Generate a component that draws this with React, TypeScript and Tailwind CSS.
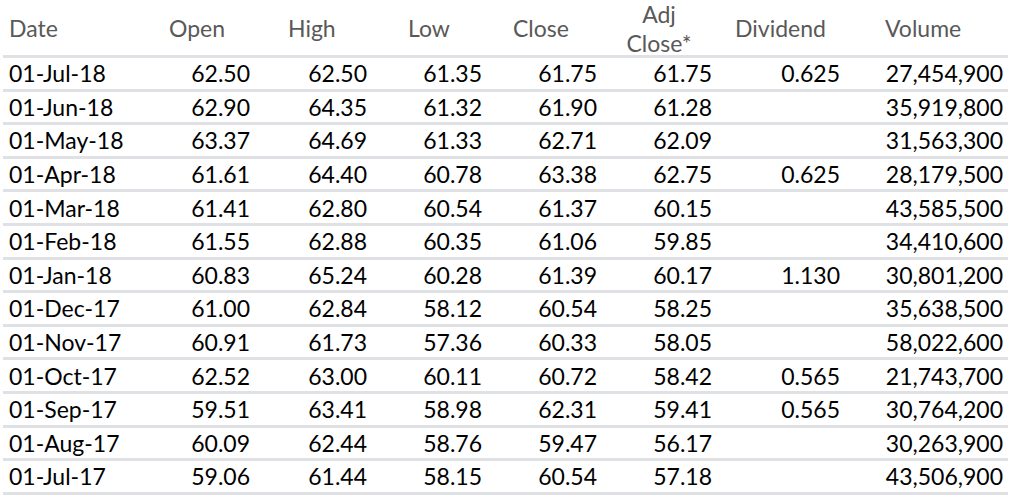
import React from 'react';

type Row = {
  date: string;
  open: string;
  high: string;
  low: string;
  close: string;
  adj: string;
  dividend: string;
  volume: string;
};

const rows: Row[] = [
  { date: '01-Jul-18', open: '62.50', high: '62.50', low: '61.35', close: '61.75', adj: '61.75', dividend: '0.625', volume: '27,454,900' },
  { date: '01-Jun-18', open: '62.90', high: '64.35', low: '61.32', close: '61.90', adj: '61.28', dividend: '', volume: '35,919,800' },
  { date: '01-May-18', open: '63.37', high: '64.69', low: '61.33', close: '62.71', adj: '62.09', dividend: '', volume: '31,563,300' },
  { date: '01-Apr-18', open: '61.61', high: '64.40', low: '60.78', close: '63.38', adj: '62.75', dividend: '0.625', volume: '28,179,500' },
  { date: '01-Mar-18', open: '61.41', high: '62.80', low: '60.54', close: '61.37', adj: '60.15', dividend: '', volume: '43,585,500' },
  { date: '01-Feb-18', open: '61.55', high: '62.88', low: '60.35', close: '61.06', adj: '59.85', dividend: '', volume: '34,410,600' },
  { date: '01-Jan-18', open: '60.83', high: '65.24', low: '60.28', close: '61.39', adj: '60.17', dividend: '1.130', volume: '30,801,200' },
  { date: '01-Dec-17', open: '61.00', high: '62.84', low: '58.12', close: '60.54', adj: '58.25', dividend: '', volume: '35,638,500' },
  { date: '01-Nov-17', open: '60.91', high: '61.73', low: '57.36', close: '60.33', adj: '58.05', dividend: '', volume: '58,022,600' },
  { date: '01-Oct-17', open: '62.52', high: '63.00', low: '60.11', close: '60.72', adj: '58.42', dividend: '0.565', volume: '21,743,700' },
  { date: '01-Sep-17', open: '59.51', high: '63.41', low: '58.98', close: '62.31', adj: '59.41', dividend: '0.565', volume: '30,764,200' },
  { date: '01-Aug-17', open: '60.09', high: '62.44', low: '58.76', close: '59.47', adj: '56.17', dividend: '', volume: '30,263,900' },
  { date: '01-Jul-17', open: '59.06', high: '61.44', low: '58.15', close: '60.54', adj: '57.18', dividend: '', volume: '43,506,900' },
];

const gridCols = 'grid grid-cols-[140px_107px_117px_115px_115px_115px_128px_163px]';

export default function App() {
  return (
    <div
      className="w-[1024px] h-[498px] bg-white overflow-hidden pl-[3px] text-[23px]"
      style={{ fontFamily: 'Lato, "Open Sans", sans-serif' }}
    >
      <div className="w-[1005px]">
        {/* header */}
        <div className={`${gridCols} h-[58px] items-center border-b-[3px] border-[#dfe1e4] text-[#595959] leading-[29px]`}>
          <div className="pl-[6px] pb-[10px]">Date</div>
          <div className="pl-[26px] pb-[10px]">Open</div>
          <div className="pl-[38px] pb-[10px]">High</div>
          <div className="pl-[41px] pb-[10px]">Low</div>
          <div className="pl-[31px] pb-[10px]">Close</div>
          <div className="pl-[25px] pb-[8px]">
            <div className="w-[74px] text-center">
              Adj
              <br />
              Close*
            </div>
          </div>
          <div className="pl-[23px] pb-[10px]">Dividend</div>
          <div className="pl-[45px] pb-[10px]">Volume</div>
        </div>

        {rows.map((r) => (
          <div
            key={r.date}
            className={`${gridCols} h-[33.6px] items-center border-b-[3px] border-[#dfe1e4] text-black leading-[30px]`}
          >
            <div className="pl-[6px]">{r.date}</div>
            <div className="text-right">{r.open}</div>
            <div className="text-right">{r.high}</div>
            <div className="text-right">{r.low}</div>
            <div className="text-right">{r.close}</div>
            <div className="text-right">{r.adj}</div>
            <div className="text-right">{r.dividend}</div>
            <div className="text-right">{r.volume}</div>
          </div>
        ))}
      </div>
    </div>
  );
}
